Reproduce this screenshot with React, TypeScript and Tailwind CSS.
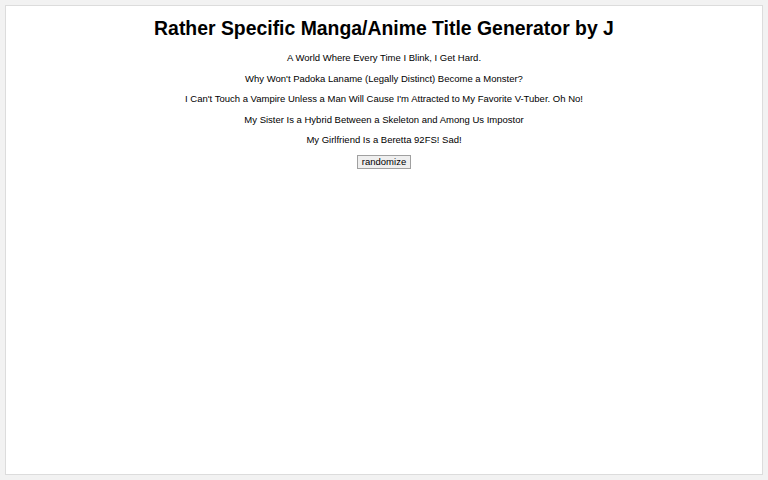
const titles = [
  "A World Where Every Time I Blink, I Get Hard.",
  "Why Won't Padoka Laname (Legally Distinct) Become a Monster?",
  "I Can't Touch a Vampire Unless a Man Will Cause I'm Attracted to My Favorite V-Tuber. Oh No!",
  "My Sister Is a Hybrid Between a Skeleton and Among Us Impostor",
  "My Girlfriend Is a Beretta 92FS! Sad!",
];

export default function App() {
  return (
    <div className="h-[480px] w-[768px] bg-[#f2f2f2] p-[5px] font-['Liberation_Sans',Arial,sans-serif] text-black">
      <div className="flex h-full flex-col items-center border border-[#dcdcdc] bg-white pt-[8px]">
        <h1 className="text-[19.4px] font-bold leading-[28px]">
          Rather Specific Manga/Anime Title Generator by J
        </h1>
        <div className="mt-[10px] flex flex-col items-center gap-[8px]">
          {titles.map((t) => (
            <p key={t} className="text-[9.5px] leading-[12.5px]">
              {t}
            </p>
          ))}
        </div>
        <button className="mt-[8px] h-[14px] border border-[#a0a0a0] bg-[#efefef] px-[4px] text-[9.5px] leading-[12px]">
          randomize
        </button>
      </div>
    </div>
  );
}
